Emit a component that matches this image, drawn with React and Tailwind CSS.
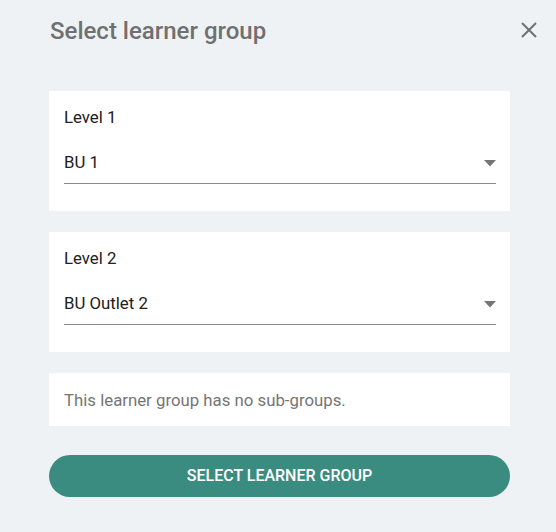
import React from "react";

function Select({ label, value }) {
  return (
    <div className="bg-white pt-[14px] pb-[27px] pl-[15px] pr-[14px]">
      <div className="text-[16.8px] leading-[24px] text-[#212121]">{label}</div>
      <div className="mt-[21px] flex items-center justify-between border-b border-[#8c8c8c] pb-[9px]">
        <span className="text-[16.8px] leading-[24px] text-[#212121]">{value}</span>
        <svg width="12" height="7" viewBox="0 0 12 7" className="mt-[2px]">
          <path d="M0 0 L12 0 L6 6.5 Z" fill="#757575" />
        </svg>
      </div>
    </div>
  );
}

export default function App() {
  return (
    <div
      className="w-[556px] h-[532px] bg-[#eef2f5] pl-[49px] pr-[46px] pt-[15px]"
      style={{ fontFamily: "Roboto, 'Liberation Sans', sans-serif" }}
    >
      <div className="flex items-start justify-between h-[32px]">
        <h1 className="text-[24px] leading-[32px] font-medium text-[#707070] ml-[1px]">
          Select learner group
        </h1>
        <svg width="16" height="16" viewBox="0 0 16 16" className="mr-[-27px] mt-[7px]">
          <path d="M1 1 L15 15 M15 1 L1 15" stroke="#707070" strokeWidth="2" />
        </svg>
      </div>
      <div className="mt-[44px] flex flex-col gap-[21px]">
        <Select label="Level 1" value="BU 1" />
        <Select label="Level 2" value="BU Outlet 2" />
        <div className="bg-white h-[53px] flex items-center px-[15px] text-[16.8px] leading-[24px] text-[#757575]">
          This learner group has no sub-groups.
        </div>
      </div>
      <button className="mt-[29px] w-full h-[42px] rounded-full bg-[#3b8c80] text-white text-[16px] font-medium uppercase">
        Select learner group
      </button>
    </div>
  );
}
